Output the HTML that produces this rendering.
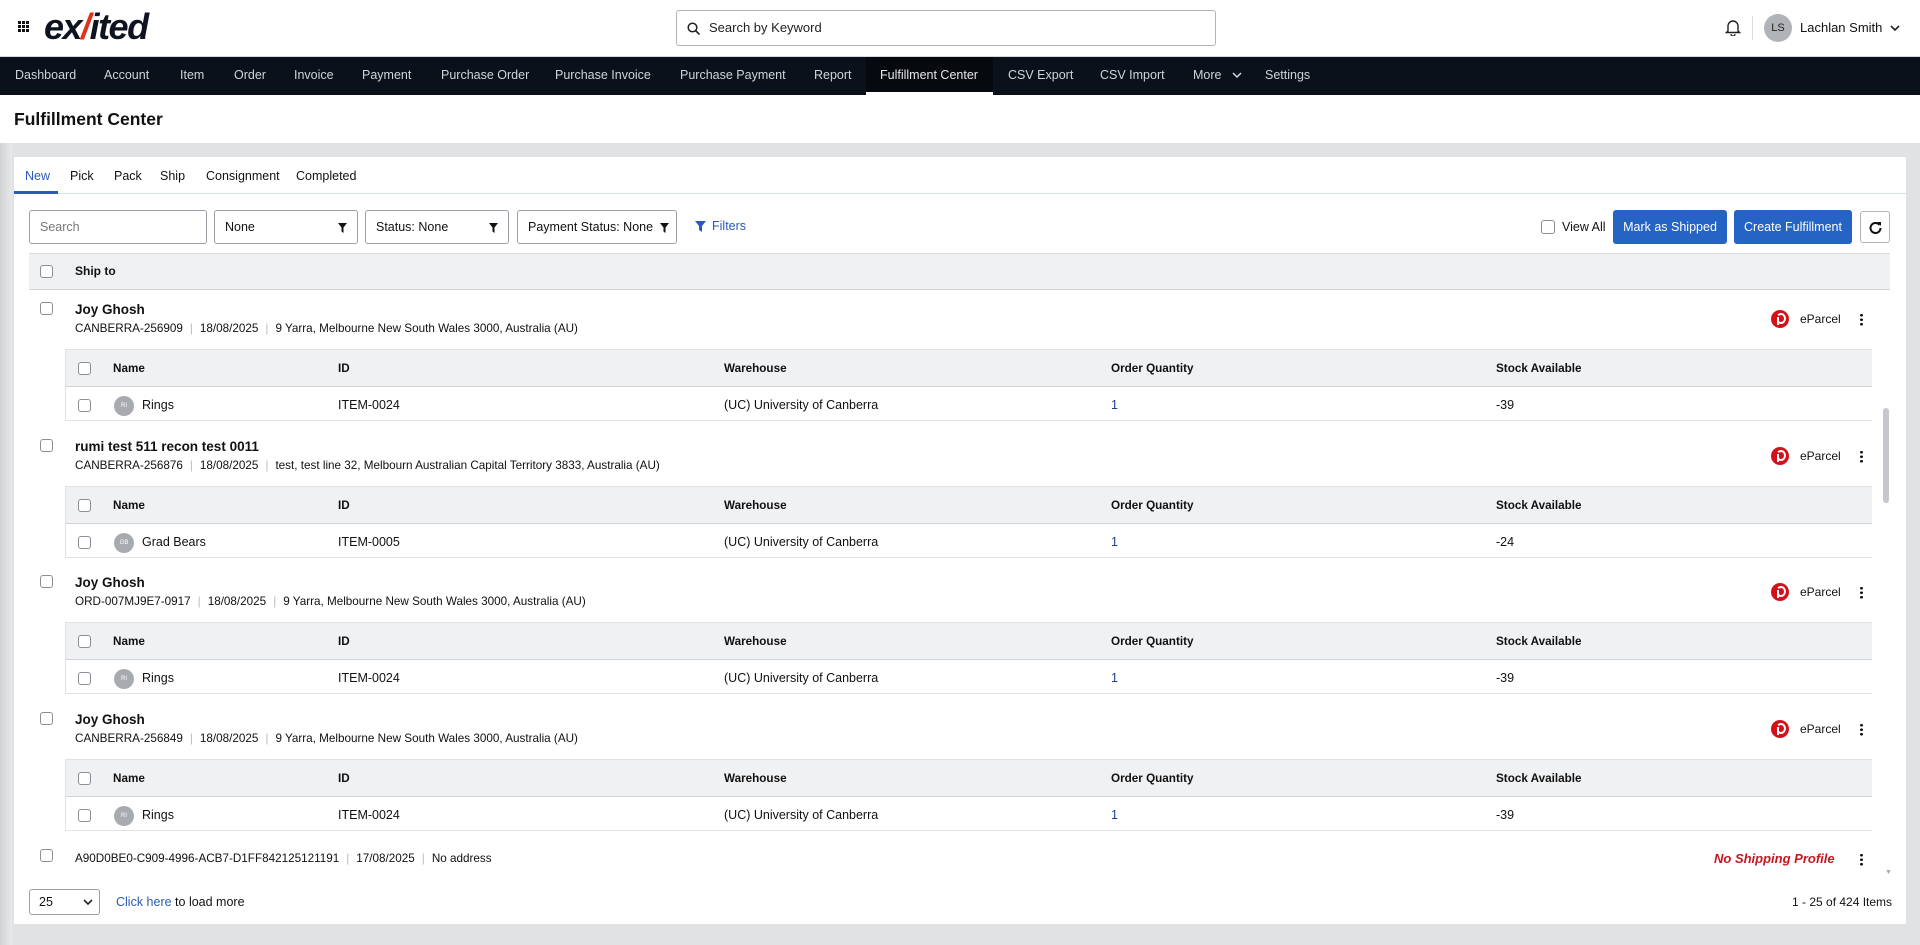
<!DOCTYPE html>
<html><head><meta charset="utf-8"><style>
*{box-sizing:border-box;margin:0;padding:0}
body{width:1920px;height:945px;overflow:hidden;font-family:"Liberation Sans",Arial,sans-serif;background:#e1e2e4;color:#111;position:relative;font-size:13px}
.abs{position:absolute}
.hdr{left:0;top:0;width:1920px;height:57px;background:#fff;border-bottom:1px solid #d5d8dc}
.nav{left:0;top:57px;width:1920px;height:38px;background:#0b111b}
.nav span{position:absolute;top:0;height:38px;line-height:37px;color:#d0d4d9;font-size:12.5px}
.title{left:0;top:95px;width:1920px;height:48px;background:#fff}
.card{left:14px;top:157px;width:1892px;height:767px;background:#fff}
.cb{position:absolute;width:13px;height:13px;border:1px solid #8a8f96;border-radius:3px;background:#fff}
.box{position:absolute;border:1px solid #9aa0a6;border-radius:3px;height:34px;line-height:32px;padding-left:10px;font-size:12.5px;background:#fff}
.box svg{position:absolute;right:10px;top:12px}
.btn{position:absolute;top:210px;height:34px;line-height:34px;background:#2563c4;color:#fff;border-radius:3px;text-align:center;font-size:12.5px}
.hd{background:#f0f1f3}
.b{font-weight:bold}
.sep{color:#bbb;margin:0 7px}
.av{position:absolute;width:20px;height:20px;border-radius:50%;background:#a7abb0;color:#fff;font-size:6px;line-height:20px;text-align:center}
.ep{position:absolute;width:18px;height:18px;border-radius:50%;background:#d4101a}
.ep:after{content:"";position:absolute;left:5px;top:3px;width:6px;height:7px;border:2px solid #fff;border-left-color:transparent;border-radius:50%}
.ep:before{content:"";position:absolute;left:6px;top:7px;width:2px;height:8px;background:#fff}
.kb{position:absolute;width:3px;height:13px;background:radial-gradient(circle,#111 1.3px,transparent 1.5px) 0 0/3px 4.5px repeat-y}
</style></head><body>
<div class="abs hdr">
 <svg class="abs" style="left:18px;top:21px" width="11" height="11"><g fill="#111"><rect x="0" y="0" width="3" height="3"/><rect x="4" y="0" width="3" height="3"/><rect x="8" y="0" width="3" height="3"/><rect x="0" y="4" width="3" height="3"/><rect x="4" y="4" width="3" height="3"/><rect x="8" y="4" width="3" height="3"/><rect x="0" y="8" width="3" height="3"/><rect x="4" y="8" width="3" height="3"/><rect x="8" y="8" width="3" height="3"/></g></svg>
 <div class="abs" style="left:44px;top:7px;font-size:36px;font-weight:bold;font-style:italic;letter-spacing:-1.5px;color:#0d1420;line-height:40px">ex<span style="color:#e0301e">/</span>ited</div>
 <div class="abs" style="left:676px;top:10px;width:540px;height:36px;border:1px solid #b0b4ba;border-radius:3px">
  <svg class="abs" style="left:10px;top:11px" width="13" height="13"><circle cx="5.5" cy="5.5" r="4.3" fill="none" stroke="#222" stroke-width="1.5"/><line x1="8.5" y1="8.5" x2="12.5" y2="12.5" stroke="#222" stroke-width="1.6"/></svg>
  <span class="abs" style="left:32px;top:9px;font-size:13px;color:#222">Search by Keyword</span></div>
 <svg class="abs" style="left:1725px;top:18px" width="16" height="18"><path d="M3 13V8a5 5 0 0 1 10 0v5l1.5 1.5h-13z" fill="none" stroke="#222" stroke-width="1.4"/><path d="M6 16a2 2 0 0 0 4 0" fill="none" stroke="#222" stroke-width="1.3"/></svg>
 <div class="abs" style="left:1752px;top:16px;width:1px;height:24px;background:#d8dbdf"></div>
 <div class="abs" style="left:1764px;top:14px;width:28px;height:28px;border-radius:50%;background:#b0b4b8;font-size:11px;line-height:28px;text-align:center;color:#222">LS</div>
 <div class="abs" style="left:1800px;top:20px;font-size:13px;color:#111">Lachlan Smith</div>
 <svg class="abs" style="left:1890px;top:25px" width="10" height="7"><path d="M1 1l4 4 4-4" fill="none" stroke="#222" stroke-width="1.6"/></svg>
</div>
<div class="abs nav">
 <span style="left:15px">Dashboard</span><span style="left:104px">Account</span><span style="left:180px">Item</span><span style="left:234px">Order</span><span style="left:294px">Invoice</span><span style="left:362px">Payment</span><span style="left:441px">Purchase Order</span><span style="left:555px">Purchase Invoice</span><span style="left:680px">Purchase Payment</span><span style="left:814px">Report</span>
 <div class="abs" style="left:866px;top:0;width:127px;height:38px;background:#06090e;border-bottom:3px solid #fff"></div>
 <span style="left:880px;color:#e6e8eb">Fulfillment Center</span><span style="left:1008px">CSV Export</span><span style="left:1100px">CSV Import</span><span style="left:1193px">More</span>
 <svg class="abs" style="left:1232px;top:15px" width="10" height="7"><path d="M1 1l4 4 4-4" fill="none" stroke="#d6d9de" stroke-width="1.5"/></svg>
 <span style="left:1265px">Settings</span>
</div>
<div class="abs title"><div class="abs" style="left:14px;top:14px;font-size:17.5px;font-weight:bold">Fulfillment Center</div></div>
<div class="abs" style="left:0;top:143px;width:12px;height:802px;background:linear-gradient(90deg,#d2d3d5,#e8e9ea)"></div>
<div class="abs card"></div>
<!-- tabs -->
<div class="abs" style="left:14px;top:193px;width:1892px;height:1px;background:#d5e0ec"></div>
<div class="abs" style="left:14px;top:191px;width:44px;height:3px;background:#2a5bb5"></div>
<div class="abs" style="top:169px;left:25px;font-size:12.5px;color:#2a5bb5">New</div>
<div class="abs" style="top:169px;left:70px;font-size:12.5px">Pick</div>
<div class="abs" style="top:169px;left:114px;font-size:12.5px">Pack</div>
<div class="abs" style="top:169px;left:160px;font-size:12.5px">Ship</div>
<div class="abs" style="top:169px;left:206px;font-size:12.5px">Consignment</div>
<div class="abs" style="top:169px;left:296px;font-size:12.5px">Completed</div>
<!-- filters -->
<div class="box" style="left:29px;top:210px;width:178px;color:#777">Search</div>
<div class="box" style="left:214px;top:210px;width:144px">None<svg width="9" height="10"><path d="M0 0h9L5.5 4.5V10L3.5 8.5V4.5z" fill="#111"/></svg></div>
<div class="box" style="left:365px;top:210px;width:144px">Status: None<svg width="9" height="10"><path d="M0 0h9L5.5 4.5V10L3.5 8.5V4.5z" fill="#111"/></svg></div>
<div class="box" style="left:517px;top:210px;width:160px">Payment Status: None<svg width="9" height="10" style="right:7px"><path d="M0 0h9L5.5 4.5V10L3.5 8.5V4.5z" fill="#111"/></svg></div>
<svg class="abs" style="left:695px;top:221px" width="11" height="11"><path d="M0 0h11L7 5v6L4 9V5z" fill="#2a5bb5"/></svg>
<div class="abs" style="left:712px;top:219px;color:#2a5bb5;font-size:12.5px">Filters</div>
<div class="cb" style="left:1541px;top:220px;width:14px;height:14px"></div>
<div class="abs" style="left:1562px;top:220px;font-size:12.5px">View All</div>
<div class="btn" style="left:1613px;width:114px">Mark as Shipped</div>
<div class="btn" style="left:1734px;width:118px">Create Fulfillment</div>
<div class="abs" style="left:1860px;top:211px;width:30px;height:32px;border:1px solid #b0b4ba;border-radius:3px"><svg class="abs" style="left:8px;top:9px" width="13" height="13"><path d="M10.5 4A5 5 0 1 0 11.5 7" fill="none" stroke="#111" stroke-width="2"/><path d="M8 1h4v4z" fill="#111"/></svg></div>
<!-- table header -->
<div class="abs hd" style="left:29px;top:253px;width:1861px;height:37px;border-top:1px solid #d8dbdf;border-bottom:1px solid #d0d3d7"></div>
<div class="cb" style="left:40px;top:265px"></div>
<div class="abs b" style="left:75px;top:264px;font-size:12px">Ship to</div>
<!-- scrollbar -->
<div class="abs" style="left:1883px;top:408px;width:6px;height:95px;background:#c4c7cb;border-radius:3px"></div>
<div id="rows"></div>
<!-- last row -->
<div class="cb" style="left:40px;top:849px"></div>
<div class="abs" style="left:75px;top:852px;font-size:11.7px">A90D0BE0-C909-4996-ACB7-D1FF842125121191<span class="sep">|</span>17/08/2025<span class="sep">|</span>No address</div>
<div class="abs" style="left:1714px;top:851px;font-size:13px;font-weight:bold;font-style:italic;color:#c8161e">No Shipping Profile</div>
<div class="kb" style="left:1860px;top:853px"></div>
<div class="abs" style="left:1885px;top:869px;font-size:7px;color:#aaa">&#9660;</div>
<!-- footer -->
<div class="abs" style="left:29px;top:889px;width:71px;height:26px;border:1px solid #9aa0a6;border-radius:3px;font-size:12.5px;line-height:24px;padding-left:9px">25</div>
<svg class="abs" style="left:83px;top:899px" width="10" height="7"><path d="M1 1l4 4 4-4" fill="none" stroke="#222" stroke-width="1.6"/></svg>
<div class="abs" style="left:116px;top:895px;font-size:12.5px"><span style="color:#2a5bb5">Click here</span> to load more</div>
<div class="abs" style="left:1792px;top:895px;font-size:12px">1 - 25 of 424 Items</div>
<script>
var g=[["Joy Ghosh","CANBERRA-256909","9 Yarra, Melbourne New South Wales 3000, Australia (AU)","RI","Rings","ITEM-0024","-39"],
["rumi test 511 recon test 0011","CANBERRA-256876","test, test line 32, Melbourn Australian Capital Territory 3833, Australia (AU)","GB","Grad Bears","ITEM-0005","-24"],
["Joy Ghosh","ORD-007MJ9E7-0917","9 Yarra, Melbourne New South Wales 3000, Australia (AU)","RI","Rings","ITEM-0024","-39"],
["Joy Ghosh","CANBERRA-256849","9 Yarra, Melbourne New South Wales 3000, Australia (AU)","RI","Rings","ITEM-0024","-39"]];
var h="";var tops=[290,427,563,700];
g.forEach(function(r,i){var t=tops[i];
h+='<div class="cb" style="left:40px;top:'+(t+12)+'px"></div>';
h+='<div class="abs b" style="left:75px;top:'+(t+12)+'px;font-size:13.5px">'+r[0]+'</div>';
h+='<div class="abs" style="left:75px;top:'+(t+32)+'px;font-size:11.7px">'+r[1]+'<span class="sep">|</span>18/08/2025<span class="sep">|</span>'+r[2]+'</div>';
h+='<div class="ep" style="left:1771px;top:'+(t+20)+'px"></div><div class="abs" style="left:1800px;top:'+(t+22)+'px;font-size:12px">eParcel</div><div class="kb" style="left:1860px;top:'+(t+23)+'px"></div>';
h+='<div class="abs hd" style="left:65px;top:'+(t+59)+'px;width:1807px;height:38px;border-top:1px solid #e0e2e5;border-bottom:1px solid #d0d3d7"></div>';
h+='<div class="abs" style="left:65px;top:'+(t+59)+'px;width:1px;height:71px;background:#e0e2e5"></div>';
h+='<div class="abs" style="left:65px;top:'+(t+130)+'px;width:1807px;height:1px;background:#e0e2e5"></div>';
h+='<div class="cb" style="left:78px;top:'+(t+72)+'px"></div><div class="cb" style="left:78px;top:'+(t+109)+'px"></div>';
var hy=t+72,ry=t+108;
[["Name",113],["ID",338],["Warehouse",724],["Order Quantity",1111],["Stock Available",1496]].forEach(function(c){h+='<div class="abs b" style="left:'+c[1]+'px;top:'+hy+'px;font-size:11.7px">'+c[0]+'</div>'});
h+='<div class="av" style="left:114px;top:'+(ry-2)+'px">'+r[3]+'</div><div class="abs" style="left:142px;top:'+ry+'px;font-size:12.5px">'+r[4]+'</div>';
h+='<div class="abs" style="left:338px;top:'+ry+'px;font-size:12.5px">'+r[5]+'</div><div class="abs" style="left:724px;top:'+ry+'px;font-size:12.5px">(UC) University of Canberra</div>';
h+='<div class="abs" style="left:1111px;top:'+ry+'px;font-size:12.5px;color:#1b3f8a">1</div><div class="abs" style="left:1496px;top:'+ry+'px;font-size:12.5px">'+r[6]+'</div>';
});
document.getElementById("rows").innerHTML=h;
</script>
</body></html>
